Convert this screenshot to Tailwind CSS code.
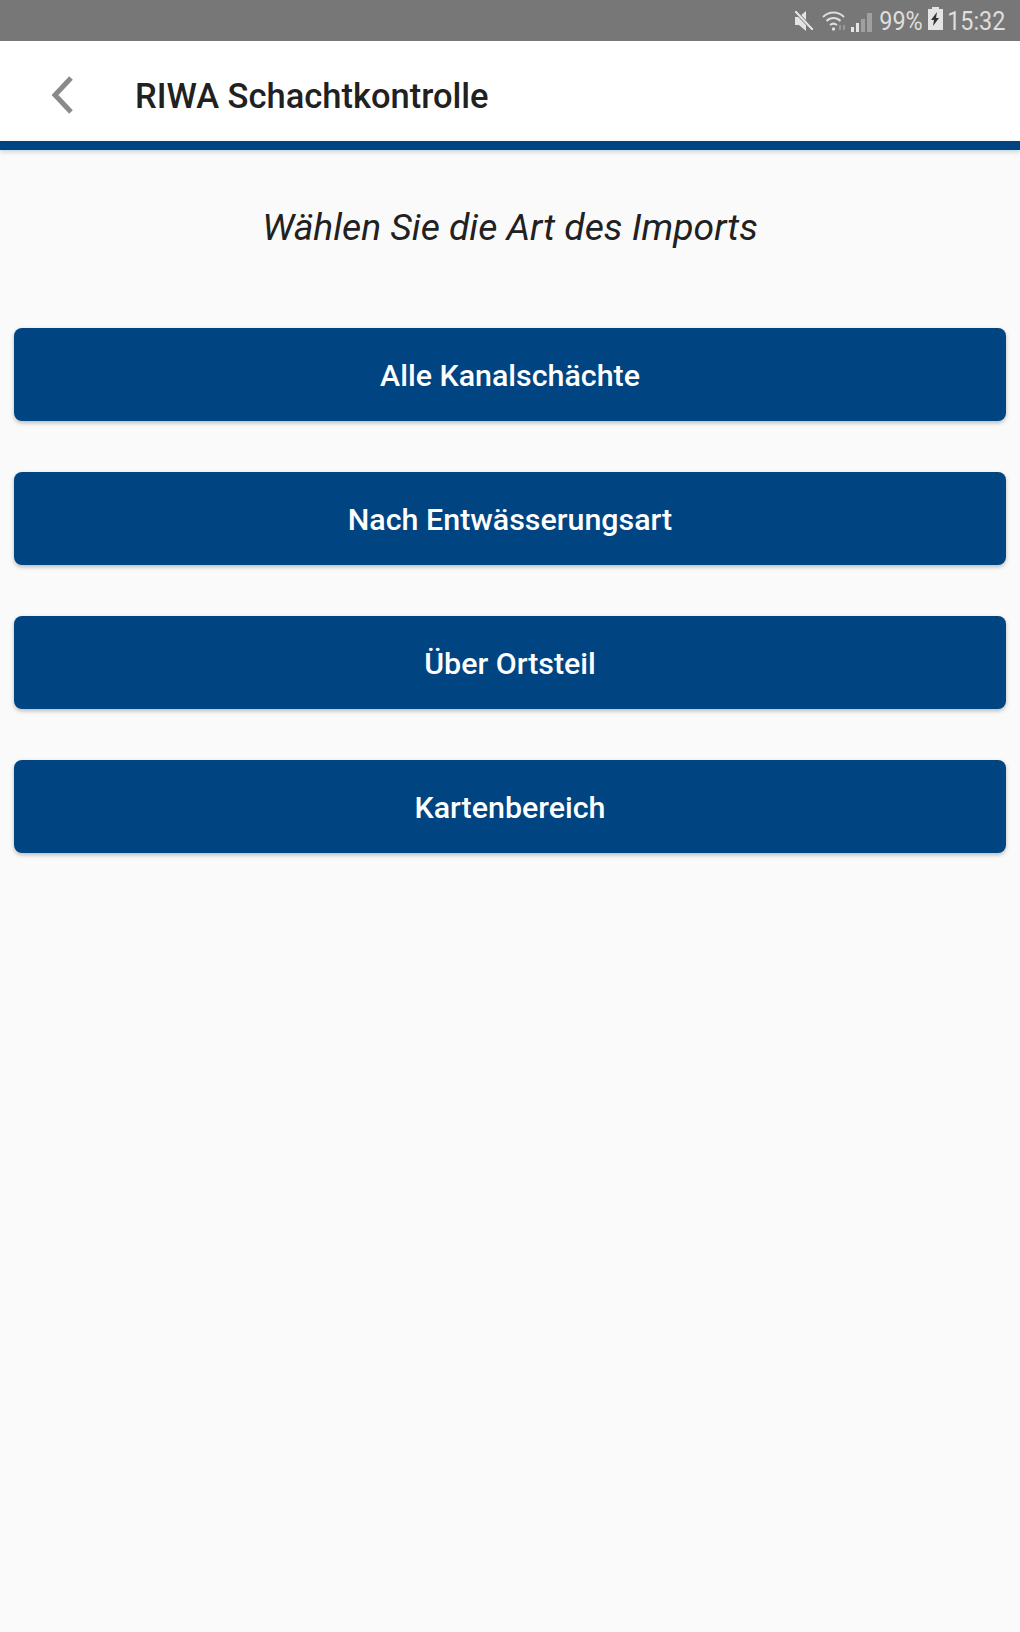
<!DOCTYPE html>
<html lang="de">
<head>
    <meta charset="UTF-8">
    <meta name="viewport" content="width=device-width, initial-scale=1.0">
    <title>RIWA Schachtkontrolle</title>
    <script src="https://cdn.jsdelivr.net/npm/@tailwindcss/browser@4"></script>
</head>
<body class="bg-[#fafafa] h-[1632px] w-[1020px] overflow-hidden font-['Roboto',sans-serif]">
    <!-- status bar -->
    <div class="h-[41px] bg-[#777777] flex items-center justify-end pr-[13px] text-[#dedede] text-[26px] leading-none">
        <svg class="w-[20px] h-[22px] mr-[8px]" viewBox="0 0 20 22" fill="#e4e4e4">
            <path d="M1 7h4l7-6v20l-7-6H1z"/>
            <path d="M0 2l2-2 18 19-2 2z" stroke="#777777" stroke-width="1"/>
        </svg>
        <svg class="w-[26px] h-[20px] mr-[3px]" viewBox="0 0 26 20" fill="none" stroke="#dedede" stroke-width="2">
            <path d="M1 6c6-6 15-6 21 0"/>
            <path d="M4.500 10c4-4 10-4 14 0"/>
            <path d="M8 14c2.500-2 4.500-2 7 0"/>
            <circle cx="11.500" cy="18" r="1.700" fill="#dedede" stroke="none"/>
            <path d="M18 19v-5M22 19v-5" stroke="#a5a5a5" stroke-width="1.500"/>
        </svg>
        <svg class="w-[21px] h-[20px] mr-[5px] mt-[2px]" viewBox="0 0 21 20">
            <rect x="0" y="15" width="3" height="5" fill="#e4e4e4"/>
            <rect x="5" y="11" width="3" height="9" fill="#e4e4e4"/>
            <rect x="10" y="7" width="4" height="13" fill="#a0a0a0"/>
            <rect x="16" y="1" width="5" height="19" fill="#a0a0a0"/>
        </svg>
        <span class="w-[46px] text-center scale-x-90 mt-[1px]">99%</span>
        <svg class="w-[15px] h-[23px] ml-[5px] mr-[1px] mb-[4px]" viewBox="0 0 15 23">
            <path d="M4 0h7v2h4v21H0V2h4z" fill="#e4e4e4"/>
            <path d="M9 5L3 13h3l-1 6 6-8H8z" fill="#333333"/>
        </svg>
        <span class="w-[63px] text-center scale-x-90 mt-[1px]">15:32</span>
    </div>
    <!-- header -->
    <header class="h-[100px] pt-[10px] bg-white flex items-center">
        <svg class="w-[26px] h-[38px] ml-[50px] mb-[3px]" viewBox="0 0 26 38" fill="none" stroke="#8a8a8a" stroke-width="5">
            <path d="M21 2L5 19l16 17"/>
        </svg>
        <h1 class="ml-[59px] text-[34.500px] font-medium text-[#212121] leading-none">RIWA Schachtkontrolle</h1>
    </header>
    <div class="h-[9px] bg-[#004481] shadow-[0_2px_4px_rgba(0,68,129,0.2)]"></div>

    <main class="px-[14px]">
        <p class="mt-[56px] text-center italic text-[37.300px] leading-[42px] text-[#212121]">Wählen Sie die Art des Imports</p>
        <div class="mt-[80px] flex flex-col gap-[51px]">
            <button class="h-[93px] pt-[3px] rounded-[8px] bg-[#004481] text-white text-[30.400px] font-medium shadow-[0_2px_4px_rgba(0,0,0,0.25)]">Alle Kanalschächte</button>
            <button class="h-[93px] pt-[3px] rounded-[8px] bg-[#004481] text-white text-[30.400px] font-medium shadow-[0_2px_4px_rgba(0,0,0,0.25)]">Nach Entwässerungsart</button>
            <button class="h-[93px] pt-[3px] rounded-[8px] bg-[#004481] text-white text-[30.400px] font-medium shadow-[0_2px_4px_rgba(0,0,0,0.25)]">Über Ortsteil</button>
            <button class="h-[93px] pt-[3px] rounded-[8px] bg-[#004481] text-white text-[30.400px] font-medium shadow-[0_2px_4px_rgba(0,0,0,0.25)]">Kartenbereich</button>
        </div>
    </main>
</body>
</html>
